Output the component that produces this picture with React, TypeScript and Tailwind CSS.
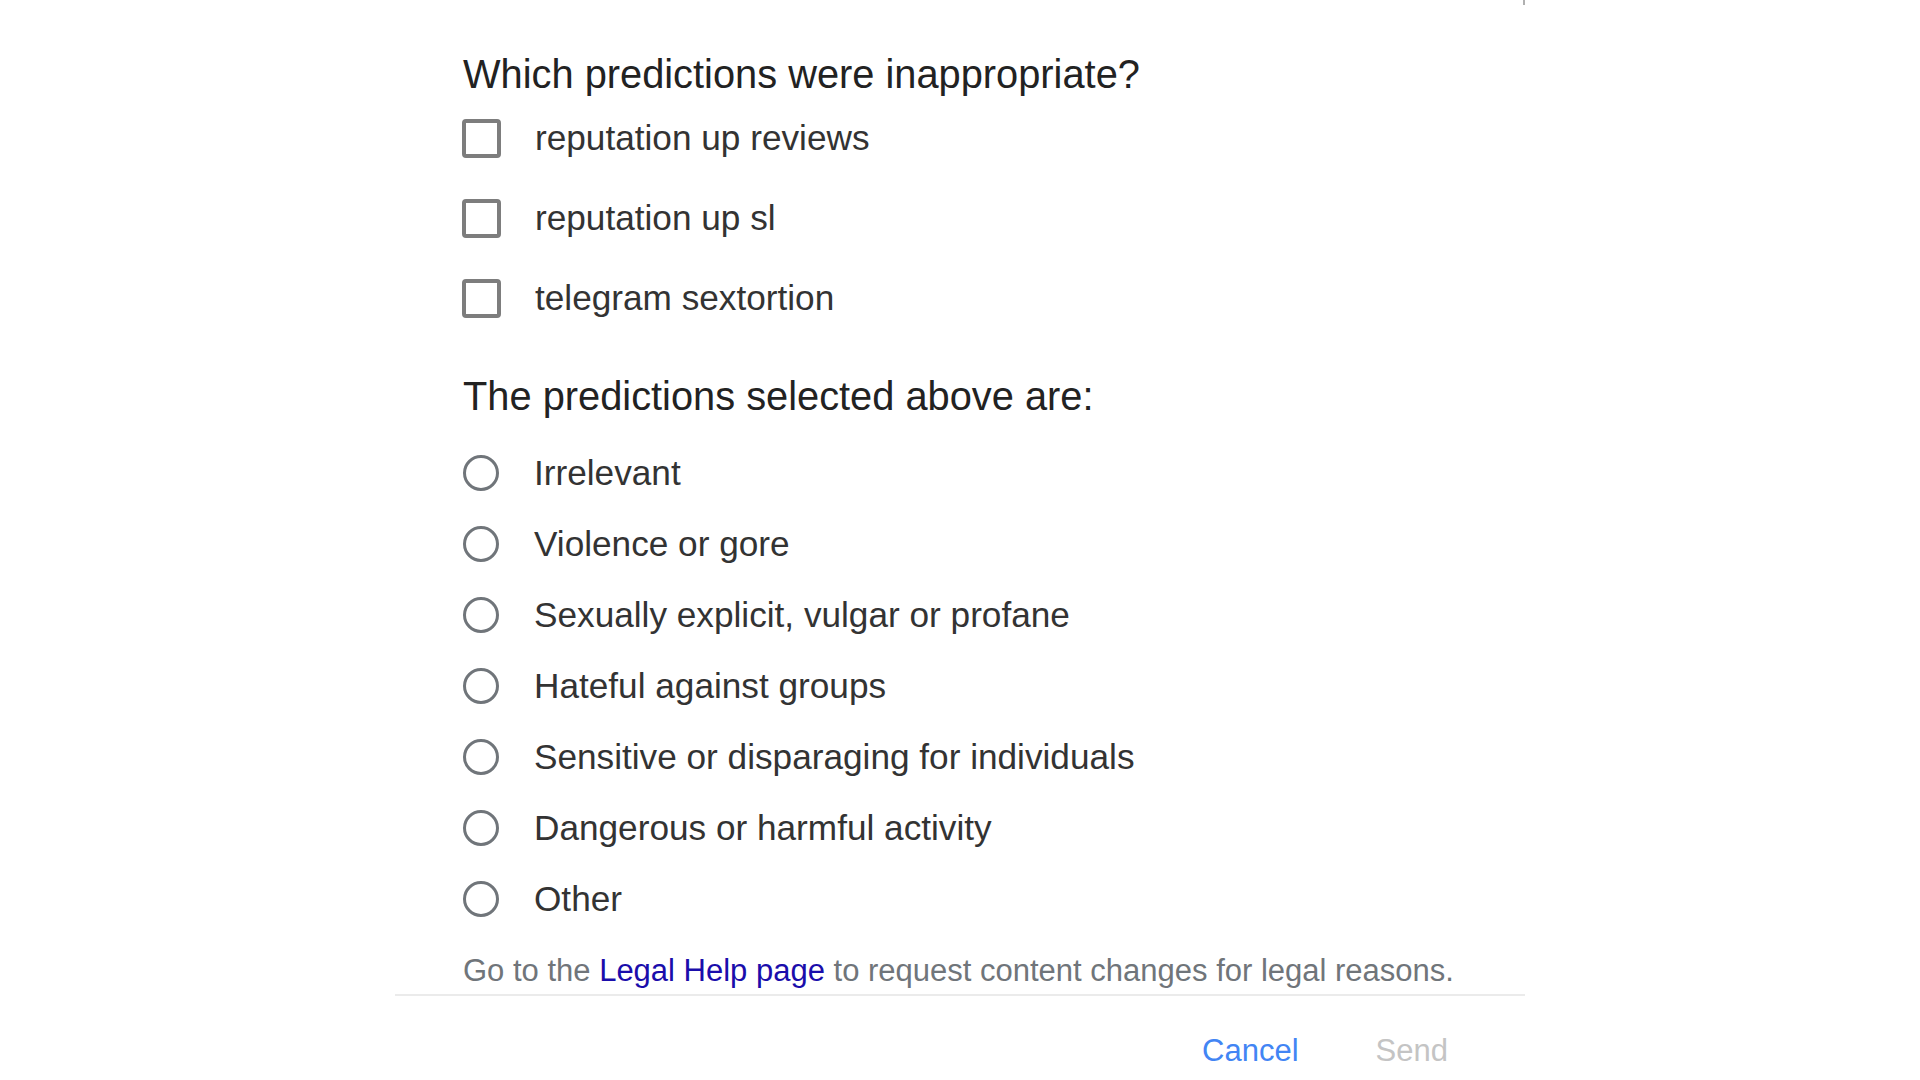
const predictions = ["reputation up reviews", "reputation up sl", "telegram sextortion"];

const reasons = [
  "Irrelevant",
  "Violence or gore",
  "Sexually explicit, vulgar or profane",
  "Hateful against groups",
  "Sensitive or disparaging for individuals",
  "Dangerous or harmful activity",
  "Other",
];

export default function App() {
  return (
    <div className="h-[1080px] w-full overflow-hidden bg-white font-['Liberation_Sans',Arial,sans-serif]">
      <div className="relative ml-[395px] w-[1130px]">
        {/* tiny edge mark at top right */}
        <div className="absolute right-0 top-0 h-[5px] w-[2px] bg-[#b0b0b0]" />

        <div className="px-[68px] pt-[50px]">
          <h2 className="text-[39.8px] leading-[48px] text-[#222222]">
            Which predictions were inappropriate?
          </h2>

          <div className="flex flex-col">
            {predictions.map((p) => (
              <label key={p} className="flex h-[80px] items-center">
                <span className="-ml-[1px] h-[39px] w-[39px] shrink-0 rounded-[4px] border-[4px] border-[#7d7d7d]" />
                <span className="ml-[34px] text-[35.2px] leading-[40px] text-[#333333]">{p}</span>
              </label>
            ))}
          </div>

          <h2 className="mt-[34px] text-[39.8px] leading-[48px] text-[#222222]">
            The predictions selected above are:
          </h2>

          <div className="mt-[17px] flex flex-col">
            {reasons.map((r) => (
              <label key={r} className="flex h-[71px] items-center">
                <span className="h-[36px] w-[36px] shrink-0 rounded-full border-[3.5px] border-[#70757a]" />
                <span className="ml-[35px] text-[35.2px] leading-[40px] text-[#333333]">{r}</span>
              </label>
            ))}
          </div>

          <p className="mt-[19px] whitespace-nowrap text-[31px] leading-[36px] text-[#70757a]">
            Go to the <a className="text-[#1a0dab]">Legal Help page</a> to request content changes for legal reasons.
          </p>
        </div>

        <div className="mt-[5px] h-[2px] w-full bg-[#ebebeb]" />

        <div className="mt-[37px] flex justify-end gap-[77px] pr-[77px]">
          <button type="button" className="text-[31px] leading-[36px] text-[#4285f4]">
            Cancel
          </button>
          <button type="button" disabled className="text-[31px] leading-[36px] text-[#c4c4c4]">
            Send
          </button>
        </div>
      </div>
    </div>
  );
}
